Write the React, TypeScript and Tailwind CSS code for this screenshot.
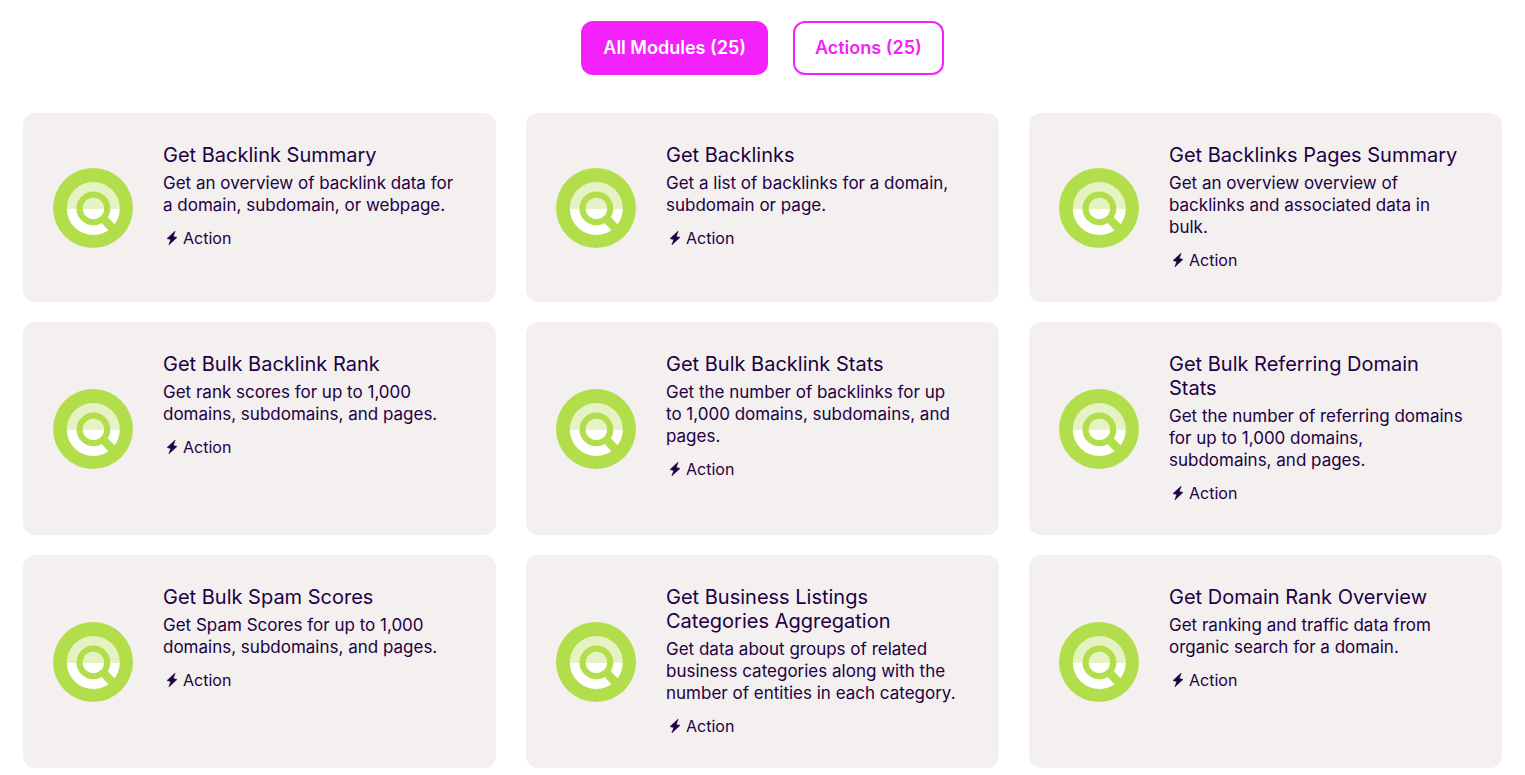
import { useState } from "react"

interface Module {
  title: string
  description: string
}

const modules: Module[] = [
  {
    title: "Get Backlink Summary",
    description: "Get an overview of backlink data for a domain, subdomain, or webpage.",
  },
  {
    title: "Get Backlinks",
    description: "Get a list of backlinks for a domain, subdomain or page.",
  },
  {
    title: "Get Backlinks Pages Summary",
    description: "Get an overview overview of backlinks and associated data in bulk.",
  },
  {
    title: "Get Bulk Backlink Rank",
    description: "Get rank scores for up to 1,000 domains, subdomains, and pages.",
  },
  {
    title: "Get Bulk Backlink Stats",
    description: "Get the number of backlinks for up to 1,000 domains, subdomains, and pages.",
  },
  {
    title: "Get Bulk Referring Domain Stats",
    description: "Get the number of referring domains for up to 1,000 domains, subdomains, and pages.",
  },
  {
    title: "Get Bulk Spam Scores",
    description: "Get Spam Scores for up to 1,000 domains, subdomains, and pages.",
  },
  {
    title: "Get Business Listings Categories Aggregation",
    description: "Get data about groups of related business categories along with the number of entities in each category.",
  },
  {
    title: "Get Domain Rank Overview",
    description: "Get ranking and traffic data from organic search for a domain.",
  },
]

const tabs = [
  { id: "all", label: "All Modules (25)" },
  { id: "actions", label: "Actions (25)" },
]

function ModuleLogo() {
  return (
    <svg viewBox="0 0 80 80" className="size-20 shrink-0" aria-hidden="true">
      <circle cx="40" cy="40" r="40" fill="#b2de4c" />
      <path d="M13.8 40.5a26.5 26.5 0 0 1 53 0z" fill="#e5f3c4" />
      <path d="M13.8 40.5a26.5 26.5 0 0 0 53 0z" fill="#fff" />
      <circle cx="40.4" cy="40.4" r="13.8" fill="none" stroke="#b2de4c" strokeWidth="6.2" />
      <path d="M50 50.4l13 13.6" stroke="#b2de4c" strokeWidth="8.6" />
    </svg>
  )
}

function BoltIcon() {
  return (
    <svg viewBox="0 0 10 14" className="ml-1 h-3.5 w-2.5" fill="currentColor" aria-hidden="true">
      <path d="M8.2 0 0 7.6 3.7 8.6 1.8 14 10 6.4 6.3 5.4z" stroke="currentColor" strokeWidth="0.5" strokeLinejoin="round" />
    </svg>
  )
}

function ModuleCard({ title, description }: Module) {
  return (
    <li className="flex items-center gap-[30px] rounded-xl bg-[#f4f0ef] p-[30px]">
      <ModuleLogo />
      <div className="flex-1 self-start">
        <h3 className="text-xl leading-6">{title}</h3>
        <p className="mt-[5px] pr-2 text-[17px] leading-[22px]">{description}</p>
        <div className="mt-2.5 flex items-center gap-1.5 text-base">
          <BoltIcon />
          <span>Action</span>
        </div>
      </div>
    </li>
  )
}

export default function App() {
  const [activeTab, setActiveTab] = useState("all")

  return (
    <main className="bg-white px-[23px] pt-[21px] pb-2 font-['Inter',sans-serif] text-[#210044]">
      <div className="flex justify-center gap-[25px]">
        {tabs.map((tab) => (
          <button
            key={tab.id}
            type="button"
            aria-pressed={activeTab === tab.id}
            onClick={() => setActiveTab(tab.id)}
            className={`h-[54px] cursor-pointer rounded-xl border-2 border-[#f322fa] px-5 text-lg font-semibold ${
              activeTab === tab.id ? "bg-[#f322fa] text-white" : "bg-white text-[#f322fa]"
            }`}
          >
            {tab.label}
          </button>
        ))}
      </div>

      <ul className="mt-[38px] grid grid-cols-1 gap-x-[30px] gap-y-5 md:grid-cols-2 lg:grid-cols-3">
        {modules.map((item) => (
          <ModuleCard key={item.title} {...item} />
        ))}
      </ul>
    </main>
  )
}
